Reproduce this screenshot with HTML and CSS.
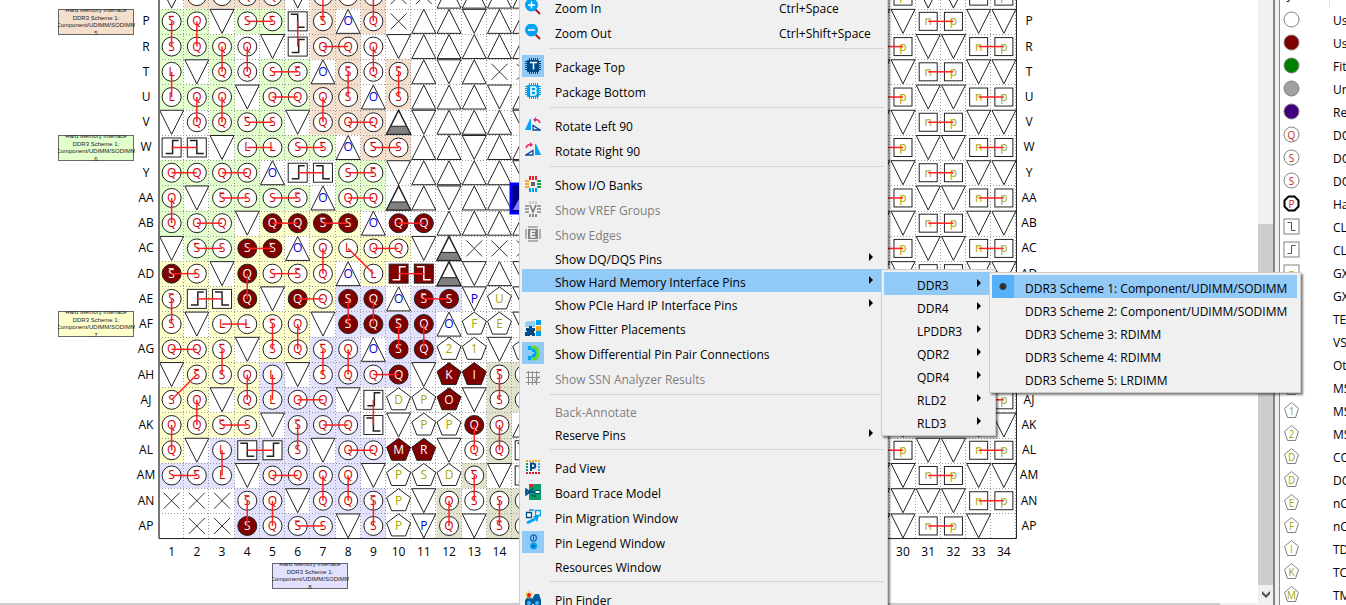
FILE: index.html
```html
<!DOCTYPE html>
<html lang="en">
<head>
    <meta charset="UTF-8">
    <meta name="viewport" content="width=device-width, initial-scale=1.0">
    <title>Pin Planner</title>
    <link rel="stylesheet" href="styles.css">
</head>
<body>
    <main class="planner">
        <div class="canvas-area">
            <svg id="package" class="package" width="1258" height="603"></svg>
            <div class="h-scroll"><div class="h-thumb"></div></div>
        </div>
        <div class="v-scroll">
            <div class="v-thumb"></div>
            <svg class="v-arrow" width="15" height="17" viewBox="0 0 15 17"><path d="M4 6l4 4 4-4v3l-4 4-4-4z" fill="#505050"/></svg>
        </div>
        <div class="splitter"></div>
        <aside class="legend">
            <div class="legend-head"><span>Symbol</span></div>
            <ul id="legend-list"></ul>
        </aside>
    </main>

    <nav class="menu main-menu">
        <ul>
            <li><button class="item tall"><svg class="icon" viewBox="0 0 16 16"><path d="M10 10l5 5" stroke="#b11a1a" stroke-width="2"/><circle cx="6.500" cy="6" r="6.500" fill="#00a3f5"/><path d="M3 6h7M6.500 2.500v7" stroke="#fff" stroke-width="1.500"/></svg>Zoom In<span class="key">Ctrl+Space</span></button></li>
            <li><button class="item tall"><svg class="icon" viewBox="0 0 16 16"><path d="M10 10l5 5" stroke="#b11a1a" stroke-width="2"/><circle cx="6.500" cy="6" r="6.500" fill="#00a3f5"/><path d="M3 6h7" stroke="#fff" stroke-width="1.500"/></svg>Zoom Out<span class="key">Ctrl+Shift+Space</span></button></li>
            <li class="sep"></li>
            <li><button class="item tall"><svg class="icon on" viewBox="0 0 16 16"><path d="M4.500 0v16M6.500 0v16M8.500 0v16M10.500 0v16M12.500 0v16M0 3.500h16M0 5.500h16M0 7.500h16M0 9.500h16M0 11.500h16" stroke="#004a86"/><rect x="2" y="2" width="12" height="12" rx="1" fill="#004a86"/><path d="M5 4.500h7M8.500 4.500v7" stroke="#fff" stroke-width="1.500"/></svg>Package Top</button></li>
            <li><button class="item tall"><svg class="icon" viewBox="0 0 16 16"><path d="M4.500 0v16M6.500 0v16M8.500 0v16M10.500 0v16M12.500 0v16M0 3.500h16M0 5.500h16M0 7.500h16M0 9.500h16M0 11.500h16" stroke="#00a0e9"/><rect x="2" y="2" width="12" height="12" rx="1" fill="#00a0e9"/><path d="M6 4v8h3a2 2 0 0 0 0-4h-3h3a2 2 0 0 0 0-4z" fill="none" stroke="#fff" stroke-width="1.500"/></svg>Package Bottom</button></li>
            <li class="sep"></li>
            <li><button class="item tall"><svg class="icon" viewBox="0 0 16 16"><path d="M0 13L5 2h1v11z" fill="#00a3f5"/><path d="M8 13V8.500L15 13z" fill="none" stroke="#0d47a1" stroke-width="1.300"/><path d="M9 3c3-1 5 0 6 3" fill="none" stroke="#e0266c" stroke-width="1.500"/><path d="M8 3l3-3v5z" fill="#e0266c"/></svg>Rotate Left 90</button></li>
            <li><button class="item tall"><svg class="icon" viewBox="0 0 16 16"><path d="M16 13L11 2h-1v11z" fill="#00a3f5"/><path d="M8 13V8.500L1 13z" fill="none" stroke="#0d47a1" stroke-width="1.300"/><path d="M7 3C4 2 2 3 1 6" fill="none" stroke="#e0266c" stroke-width="1.500"/><path d="M8 3L5 0v5z" fill="#e0266c"/></svg>Rotate Right 90</button></li>
            <li class="sep"></li>
            <li><button class="item tall"><svg class="icon" viewBox="0 0 16 16"><path d="M5 0v4M8 0v4M11 0v4" stroke="#e8202c" stroke-width="2"/><path d="M5 12v4M8 12v4M11 12v4" stroke="#00a0e9" stroke-width="2"/><path d="M0 5h4M0 8h4M0 11h4" stroke="#f7a823" stroke-width="2"/><path d="M12 5h4M12 8h4M12 11h4" stroke="#0b9d58" stroke-width="2"/><path d="M6 6h4v4H6z" fill="#666"/></svg>Show I/O Banks</button></li>
            <li><button class="item tall" disabled><svg class="icon" viewBox="0 0 16 16"><path d="M5 0v3M8 0v3M11 0v3" stroke="#ccc" stroke-width="2"/><path d="M5 13v3M8 13v3M11 13v3" stroke="#8c8c8c" stroke-width="2"/><path d="M0 5h4M0 8h4M0 11h4M12 5h4M12 8h4M12 11h4" stroke="#a0a0a0" stroke-width="2"/><path d="M5 4l3 7 3-7" fill="none" stroke="#777" stroke-width="1.500"/></svg>Show VREF Groups</button></li>
            <li><button class="item tall" disabled><svg class="icon" viewBox="0 0 16 16"><path d="M3 0h10v2H3zM0 3h2v10H0zM14 3h2v10h-2zM3 14h10v2H3z" fill="#b0b0b0"/><path d="M3 3h10v10H3z" fill="#808080"/><path d="M10.500 5H6v6h4.500M6 8h4" fill="none" stroke="#fff" stroke-width="1.500"/></svg>Show Edges</button></li>
            <li><button class="item">Show DQ/DQS Pins<i class="arrow"></i></button></li>
            <li class="open"><button class="item">Show Hard Memory Interface Pins<i class="arrow"></i></button>
                <ul class="menu submenu memory-menu">
                    <li class="open"><button class="item">DDR3<i class="arrow"></i></button>
                        <ul class="menu submenu scheme-menu">
                            <li class="open checked"><button class="item">DDR3 Scheme 1: Component/UDIMM/SODIMM</button></li>
                            <li><button class="item">DDR3 Scheme 2: Component/UDIMM/SODIMM</button></li>
                            <li><button class="item">DDR3 Scheme 3: RDIMM</button></li>
                            <li><button class="item">DDR3 Scheme 4: RDIMM</button></li>
                            <li><button class="item">DDR3 Scheme 5: LRDIMM</button></li>
                        </ul>
                    </li>
                    <li><button class="item">DDR4<i class="arrow"></i></button></li>
                    <li><button class="item">LPDDR3<i class="arrow"></i></button></li>
                    <li><button class="item">QDR2<i class="arrow"></i></button></li>
                    <li><button class="item">QDR4<i class="arrow"></i></button></li>
                    <li><button class="item">RLD2<i class="arrow"></i></button></li>
                    <li><button class="item">RLD3<i class="arrow"></i></button></li>
                </ul>
            </li>
            <li><button class="item">Show PCIe Hard IP Interface Pins<i class="arrow"></i></button></li>
            <li><button class="item tall"><svg class="icon" viewBox="0 0 16 16"><path d="M0 2h2v-1h3v1h1v-1h4v6H0z" fill="#8ed0f5"/><path d="M11 0h5v5h-5zM11 11h5v5h-5z" fill="#00a0e9"/><path d="M11 6h5v5h-5z" fill="#f7a823"/><path d="M1 8h3V6h3v2h3v3H9v2h1v3H7v-1H5v1H0v-4h2v-1H1z" fill="#004a86"/></svg>Show Fitter Placements</button></li>
            <li><button class="item tall"><svg class="icon on" viewBox="0 0 16 16"><path d="M3 1h8l3 3v3l-2 1 2 1v3l-3 3H3v-4h4v-2h2V7H7V5H3z" fill="#00a3f5"/><path d="M6 2h3c3 1 4 3 4 6s-1 5-4 6H6" fill="none" stroke="#6bdc23" stroke-width="3"/></svg>Show Differential Pin Pair Connections</button></li>
            <li><button class="item tall" disabled><svg class="icon" viewBox="0 0 16 16"><path d="M1 2.500h14M1 7.500h14M1 12.500h14M3.500 1v14M7.500 1v14M11.500 1v14M9 9l2 3 3-6" fill="none" stroke="#8c8c8c"/></svg>Show SSN Analyzer Results</button></li>
            <li class="sep"></li>
            <li><button class="item" disabled>Back-Annotate</button></li>
            <li><button class="item">Reserve Pins<i class="arrow"></i></button></li>
            <li class="sep"></li>
            <li><button class="item tall"><svg class="icon" viewBox="0 0 16 16"><path d="M1 2h14" stroke="#f7a823" stroke-width="2" stroke-dasharray="2 1"/><path d="M1 14h14" stroke="#d0202c" stroke-width="2" stroke-dasharray="2 1"/><path d="M2 4v9" stroke="#0b9d58" stroke-width="2" stroke-dasharray="2 1"/><path d="M14 4v9" stroke="#3f9fdd" stroke-width="2" stroke-dasharray="2 1"/><path d="M6 12V4.500h2a2 2 0 0 1 0 4.500H6" fill="none" stroke="#004a86" stroke-width="2"/></svg>Pad View</button></li>
            <li><button class="item tall"><svg class="icon" viewBox="0 0 16 16"><path d="M4 0h12v16H4z" fill="#0b9d68"/><path d="M5 0h3v3H5z" fill="#e8202c"/><path d="M0 8h10M1 5l4 3-4 3zM6 12h5M8 4l-3 4" fill="none" stroke="#004a86" stroke-width="1.500"/><rect x="10" y="6.500" width="5" height="3" rx="1" fill="#fff" stroke="#004a86"/></svg>Board Trace Model</button></li>
            <li><button class="item tall"><svg class="icon" viewBox="0 0 16 16"><path d="M1.500 3.500h5v5h-5z" fill="#fff" stroke="#004a86" stroke-width="1.300"/><path d="M4 1h5M10.500 1.500h5v5h-5z" fill="none" stroke="#00a0e9" stroke-width="1.300"/><path d="M2 14l8-4" stroke="#00a3f5" stroke-width="3"/><path d="M8 7h6l-2 6z" fill="#00a3f5"/></svg>Pin Migration Window</button></li>
            <li><button class="item tall"><svg class="icon on" viewBox="0 0 16 16"><circle cx="8.500" cy="4" r="3" fill="none" stroke="#0d6fb8" stroke-width="1.300"/><path d="M8.500 2.500v3" stroke="#004a86"/><circle cx="8.500" cy="12" r="3.500" fill="#00a0f0"/><path d="M7.500 11h2v2h-2z" fill="#004a86"/></svg>Pin Legend Window</button></li>
            <li><button class="item">Resources Window</button></li>
            <li class="sep"></li>
            <li><button class="item tall"><svg class="icon" viewBox="0 0 16 16"><path d="M0 16V9l3-3h2l2 2 3-5h4l2 6v7H9v-3H7v3z" fill="#005a9e"/><circle cx="4" cy="12" r="2" fill="#3fb6f5"/><circle cx="12" cy="12" r="2" fill="#3fb6f5"/><path d="M4 0v8M0 4h8M1 1l6 6M7 1L1 7" stroke="#f7c600"/><circle cx="4" cy="4" r="2" fill="#e8202c"/></svg>Pin Finder</button></li>
        </ul>
    </nav>

    <script src="script.js"></script>
</body>
</html>
```

FILE: styles.css
```css
* {
    box-sizing: border-box;
}

body {
    margin: 0;
    height: 100vh;
    overflow: hidden;
    font-family: "Open Sans", "Noto Sans", sans-serif;
    font-size: 12px;
    color: #000;
    background: #fff;
}

ul {
    list-style: none;
    margin: 0;
    padding: 0;
}

.planner {
    display: flex;
    height: 100vh;
}

/* package view */
.canvas-area {
    flex: 1;
    min-width: 0;
    display: flex;
    flex-direction: column;
    overflow: hidden;
}

.package {
    flex: 1;
    min-height: 0;
}

.h-scroll {
    height: 2px;
    background: #f0f0f0;
}

.h-thumb {
    width: 97%;
    height: 100%;
    background: #cdcdcd;
}

.package text {
    text-anchor: middle;
    font-size: 12px;
}

.package .pin-text {
    fill: #cc0000;
}

.package .light {
    fill: #fff;
}

.package .blue {
    fill: #0000e0;
}

.package .olive {
    fill: #a8a800;
}

.package .bank-text {
    font-family: "Liberation Sans", sans-serif;
    font-size: 6px;
    fill: #222;
}

.shape {
    fill: #fff;
    stroke: #222;
}

.used {
    fill: #800000;
    stroke: #222;
}

.link {
    stroke: #ff2020;
    stroke-width: 1.5;
}

.grid-line {
    stroke: #999;
    stroke-dasharray: 1 2;
}

.v-scroll {
    width: 15px;
    background: #f0f0f0;
    display: flex;
    flex-direction: column;
    justify-content: flex-end;
    padding-bottom: 3px;
}

.v-thumb {
    height: 60%;
    background: #cdcdcd;
}

.splitter {
    width: 7px;
    background: #f0f0f0;
    border-left: 2px solid #828790;
    border-right: 1px solid #828790;
}

/* legend */
.legend {
    width: 66px;
    overflow: hidden;
}

.legend-head {
    width: 50px;
    height: 8px;
    display: flex;
    align-items: flex-end;
    border-right: 1px solid #e5e5e5;
}

.legend-head span {
    margin-bottom: 5px;
    line-height: 16px;
}

.legend li {
    display: flex;
    align-items: center;
    height: 23px;
    padding-left: 3px;
    white-space: nowrap;
}

.legend li span {
    padding-top: 2px;
}

.legend li svg {
    flex: none;
    margin-right: 33px;
}

.legend li text {
    font-size: 10px;
    text-anchor: middle;
}

.legend .red {
    fill: #cc2222;
}

.legend .olive {
    fill: #a8a800;
}

/* menus */
.menu {
    position: absolute;
    padding: 2px;
    background: #f0f0f0;
    border: 1px solid #ccc;
    box-shadow: 2px 2px 2px rgba(0, 0, 0, 0.5);
}

.main-menu {
    left: 519px;
    top: -9px;
    width: 369px;
}

.menu li {
    position: relative;
}

.item {
    display: flex;
    align-items: center;
    position: relative;
    width: 100%;
    height: 23px;
    margin: 0;
    padding: 3px 0 0 33px;
    border: none;
    background: none;
    font-family: inherit;
    font-size: 12px;
    color: #000;
    white-space: nowrap;
    text-align: left;
}

.item.tall {
    height: 25px;
}

.item:disabled {
    color: #7f7f7f;
}

.open > .item {
    background: #91c9f7;
}

.item .icon {
    position: absolute;
    left: 0;
    top: 2px;
    width: 22px;
    height: 22px;
    padding: 3px;
}

.item .icon.on {
    background: #91c9f7;
}

.key {
    position: absolute;
    left: 257px;
}

.arrow {
    position: absolute;
    right: 12px;
    top: 7px;
    border-left: 4px solid #000;
    border-top: 4px solid transparent;
    border-bottom: 4px solid transparent;
}

.sep {
    height: 9px;
    padding: 4px 1px 0 28px;
}

.sep::before {
    content: "";
    display: block;
    height: 1px;
    background: #d4d4d4;
}

.submenu {
    left: calc(100% - 4px);
    top: 0;
    z-index: 1;
}

.memory-menu {
    width: 115px;
}

.scheme-menu {
    width: 312px;
}

.scheme-menu .item {
    width: 305px;
}

.checked > .item::before {
    content: "";
    position: absolute;
    left: 0;
    top: 0;
    width: 22px;
    height: 23px;
    background: radial-gradient(circle, #333 3px, #56b0fa 4px);
}
```

FILE: script.js
```js
const LEFT = 159;
const TOP = -16.5;
const PITCH = 25.22;
const ROW_PITCH = 25.23;

const names = "N P R T U V W Y AA AB AC AD AE AF AG AH AJ AK AL AM AN AP".split(" ");
const banks = { o: "#f4dfcc", g: "#e2ffcc", y: "#ffffcc", b: "#e2e2ff", k: "#e2e2cc" };

// columns 1-15: optional bank colour, then the symbol
// v ^ triangles, t shaded triangle, x no pin, r/f clocks, # pentagon, * in use, Z is S with a bar
const west = {
    N: "v oC oC oQ oQ v oC oC oC x x ^ ^ ^ ^",
    P: "gZ gQ v gS gZ f oZ ^O oQ x ^ ^ v ^ ^",
    R: "gS gQ gQ Q v r oQ oQ Q v ^ ^ ^ ^ ^",
    T: "gL v gQ Q gS gZ ^O oZ Q oZ ^ v ^ x x",
    U: "gL gQ gQ v gQ gQ oQ oS ^O oS ^ ^ ^ v ^",
    V: "v Q gQ gZ gS v oQ oQ oQ t v ^ ^ ^ v",
    W: "r f v gL gL gS gZ ^O oZ oS ^ ^ v ^ ^",
    Y: "gQ gQ gQ gQ ^O r f gS gZ v ^ ^ ^ ^ v",
    AA: "gQ v gZ gS gS gZ ^O gQ gQ t ^ v ^ ^ ^",
    AB: "gQ gQ gQ v y*Q y*Q y*Z y*S ^O *Q *Q ^ ^ ^ ^",
    AC: "v gZ gS y*S y*Z ^O yQ yL yQ yQ v t x x x",
    AD: "y*Z yS v y*Q yS yZ yQ ^O yL R F t v ^ v",
    AE: "yZ yr yf y*Q v y*Q yQ b*S b*Q ^O b*Z b*S vP #U v",
    AF: "yS v yL yL yZ yQ v b*S b*Q b*Z b*Q ^O #F #E v",
    AG: "yQ yQ yZ v yS yQ bZ bQ ^O b*S b*Q #2 #1 v #",
    AH: "v yZ yS yQ bL v bS bQ bQ b*Q v #*K #*I kZ kC",
    AJ: "yS yQ v yQ bL bQ bQ v r #D #P #*O v kS kC",
    AK: "yQ yQ yZ yS v bZ bQ bQ f v #P #P *Q kQ ^",
    AL: "yQ v bL bf br bS v bQ bQ #*M #*R v Q kQ f",
    AM: "bS bZ bL v bQ bQ bQ bQ v #P #S #D kZ v r",
    AN: "x x x bZ bQ v bQ bQ bZ #P v kQ S kS kC",
    AP: "- x x b*S bQ bZ bS v bS #P vP kQ v kZ kC"
};

// transceiver side, columns 29-34
const even = "v v [n [p v v";
const odd = "[n [p v v [n [p";
const east = { AN: "v v v v [n [p", AP: "v v [n [p v -" };

const links = ("N7-P7 N9-P9 P1-R1 P2-R2 P4-P5 P6-R6 R3-T3 R4-T4 R7-R8 R9-T9 T1-U1 T5-T6 T8-U8 T10-U10 " +
    "U2-V2 U3-V3 U5-U6 U7-V7 V4-V5 V8-V9 W1-W2 W4-W5 W6-W7 W9-W10 Y1-Y2 Y3-Y4 Y6-Y7 Y8-Y9 " +
    "AA1-AB1 AA3-AA4 AA5-AA6 AA8-AA9 AB2-AB3 AB5-AB6 AB7-AB8 AB10-AB11 AC2-AC3 AC4-AC5 AC7-AD7 AC8-AD9 AC9-AC10 " +
    "AD1-AD2 AD4-AE4 AD5-AD6 AD10-AD11 AE1-AF1 AE2-AE3 AE6-AE7 AE8-AF8 AE9-AF9 AE11-AE12 " +
    "AF3-AF4 AF5-AG5 AF6-AG6 AF10-AG10 AF11-AG11 AG1-AG2 AG3-AH3 AG7-AH7 AG8-AH8 " +
    "AH2-AJ1 AH4-AJ4 AH5-AJ5 AH9-AH10 AH14-AJ14 AJ2-AK2 AJ6-AJ7 AJ9-AK9 " +
    "AK1-AL1 AK3-AK4 AK6-AL6 AK7-AK8 AK13-AL13 AK14-AL14 AL3-AM3 AL4-AL5 AL8-AL9 " +
    "AM1-AM2 AM5-AM6 AM7-AN7 AM8-AN8 AM13-AN13 AN4-AP4 AN5-AP5 AN9-AP9 AN12-AP12 AN14-AP14 AP6-AP7").split(" ");

function colX(col) {
    return LEFT + (col - 0.5) * PITCH;
}

function rowY(name) {
    return TOP + (names.indexOf(name) + 0.5) * ROW_PITCH;
}

function letter(ch, cls, y = 4) {
    return `<text y="${y}" class="${cls}">${ch}</text>`;
}

// one pin symbol around its own centre
function symbol(code) {
    const used = code.includes("*");
    const shape = used ? "used" : "shape";
    const c = code.replace("*", "");
    const last = c[c.length - 1];

    if (c === "-") return "";
    if (c === "x") return `<path d="M-8-8L8 8M8-8L-8 8" stroke="#333"/>`;
    if (c[0] === "v") return `<path class="shape" d="M-12-12H12L0 12z"/>` + (c[1] ? letter(c[1], "blue") : "");
    if (c[0] === "^") return `<path class="shape" d="M-12 12H12L0-12z"/>` + (c[1] ? letter(c[1], "blue") : "");
    if (c === "t") return `<path class="shape" d="M-12 12H12L0-12z" stroke-width="1.5"/><path d="M-8 4H8L12 12H-12z" fill="#808080" stroke="#222"/>`;
    if (c[0] === "#") {
        return `<path class="${shape}" d="M0-12L12-3L7 10H-7L-12-3z"/>` +
            (c[1] ? letter(c[1], used ? "light" : "olive") : "");
    }
    if (c[0] === "[") return `<rect class="shape" x="-9" y="-9" width="18" height="18"/>` + letter(last, "olive");
    if ("rfRF".includes(c)) {
        const dark = c === "R" || c === "F";
        const d = c.toLowerCase() === "r" ? "M-6 6H1V-7H7" : "M-7-7H0V6H7";
        return `<rect class="${dark ? "used" : "shape"}" x="-9.5" y="-9.5" width="19" height="19"/>` +
            `<path d="${d}" fill="none" stroke="${dark ? "#fff" : "#222"}" stroke-width="1.5"/>`;
    }
    let out = `<circle class="${shape}" r="9.5"/>`;
    if (c !== "C") {
        out += letter(c === "Z" ? "S" : c, used ? "light" : "pin-text");
        if (c === "Z") out += `<path d="M-3-5H2" stroke="${used ? "#fff" : "#cc0000"}"/>`;
    }
    return out;
}

function link(a, b) {
    const [, r1, c1] = a.match(/([A-Z]+)(\d+)/);
    const [, r2, c2] = b.match(/([A-Z]+)(\d+)/);
    return `<line class="link" x1="${colX(c1)}" y1="${rowY(r1)}" x2="${colX(c2)}" y2="${rowY(r2)}"/>`;
}

function drawPackage() {
    const right = LEFT + 34 * PITCH;
    const bottom = TOP + names.length * ROW_PITCH;
    let fills = "", lines = "", pins = "", labels = "", wires = "";

    const place = (token, name, col) => {
        const [, bank, code] = token.match(/^([ogybk]?)(.*)$/);
        const x = colX(col), y = rowY(name);
        if (bank) {
            fills += `<rect x="${x - PITCH / 2}" y="${y - ROW_PITCH / 2}" width="${PITCH}" height="${ROW_PITCH}" fill="${banks[bank]}"/>`;
        }
        pins += `<g transform="translate(${x} ${y})">${symbol(code)}</g>`;
    };

    names.forEach((name, i) => {
        west[name].split(" ").forEach((t, n) => place(t, name, n + 1));
        (east[name] || (i % 2 ? even : odd)).split(" ").forEach((t, n) => {
            place(t, name, n + 29);
            if (t === "[n") wires += link(name + (n + 29), name + (n + 30));
        });
        const y = Math.round(TOP + i * ROW_PITCH) + 0.5;
        lines += `<line class="grid-line" x1="${LEFT}" x2="${right}" y1="${y}" y2="${y}"/>`;
        labels += `<text x="146" y="${rowY(name) + 4}">${name}</text><text x="1029" y="${rowY(name) + 4}">${name}</text>`;
    });
    for (let col = 1; col <= 34; col++) {
        const x = Math.round(LEFT + col * PITCH) - 0.5;
        lines += `<line class="grid-line" x1="${x}" x2="${x}" y1="0" y2="${bottom}"/>`;
        labels += `<text x="${colX(col)}" y="556">${col}</text>`;
    }
    links.forEach(l => { wires += link(...l.split("-")); });

    const frame = `<path d="M${LEFT} 0V${bottom}" stroke="#777" stroke-width="2"/>` +
        `<path d="M${LEFT} ${bottom}H${right}V0" fill="none" stroke="#222"/>`;
    const selected = `<rect x="511" y="184" width="29" height="29" fill="#000080" stroke="#0000ff" stroke-width="3"/>` +
        `<path d="M513 210L526 186V210z" fill="#8080ff"/>`;

    document.getElementById("package").innerHTML = fills + lines + pins + wires + frame + selected + labels +
        bankLabel(58, 9, "o", 5) + bankLabel(58, 135, "g", 6) + bankLabel(58, 311, "y", 7) + bankLabel(272, 563, "b", 8);
}

function bankLabel(x, y, bank, number) {
    const rows = ["Hard Memory Interface", "DDR3 Scheme 1:", "Component/UDIMM/SODIMM", number];
    const baselines = [3, 11, 18, 26];
    return `<svg x="${x}" y="${y}" width="77" height="26">
        <rect x="0.5" y="0.5" width="75" height="25" fill="${banks[bank]}" stroke="#666"/>
        ${rows.map((t, i) => `<text class="bank-text" x="38" y="${baselines[i]}">${t}</text>`).join("")}
    </svg>`;
}

const legend = [
    ["o", "#fff", "User assigned pin"], ["o", "#800000", "User assigned"], ["o", "#008000", "Fitter assigned pin"],
    ["o", "#a0a0a4", "Unbonded pad"], ["o", "#400080", "Reserved pin"],
    ["oQ", "#fff", "DQ"], ["oS", "#fff", "DQS"], ["oS", "#fff", "DQSB"], ["hP", "#fff", "Hard processor"],
    ["f", "#fff", "CLK_n"], ["r", "#fff", "CLK_p"], ["sn", "#fff", "GXB_n"], ["sp", "#fff", "GXB_p"],
    ["p", "#fff", "TEMPDIODE"], ["p", "#fff", "VSS"], ["p", "#fff", "Other"],
    ["p0", "#fff", "MSEL0"], ["p1", "#fff", "MSEL1"], ["p2", "#fff", "MSEL2"],
    ["pD", "#fff", "CONF_DONE"], ["pD", "#fff", "DCLK"], ["pE", "#fff", "nCE"], ["pF", "#fff", "nCONFIG"],
    ["pI", "#fff", "TDI"], ["pK", "#fff", "TCK"], ["pM", "#fff", "TMS"]
];

function legendIcon(kind, fill) {
    const stroke = `fill="${fill}" stroke="#808080"`;
    const shapes = {
        o: `<circle r="7.5" ${stroke}/>`,
        h: `<path d="M-3-7H3L7-3V3L3 7H-3L-7 3V-3z" fill="#fff" stroke="#000" stroke-width="2"/>`,
        f: `<rect x="-7.5" y="-7.5" width="15" height="15" ${stroke}/><path d="M-4-4H0V4H4" fill="none" stroke="#555"/>`,
        r: `<rect x="-7.5" y="-7.5" width="15" height="15" ${stroke}/><path d="M-4 4H0V-4H4" fill="none" stroke="#555"/>`,
        s: `<rect x="-7.5" y="-7.5" width="15" height="15" ${stroke}/>`,
        p: `<path d="M0-8L7-2L4 7H-4L-7-2z" ${stroke}/>`
    };
    const cls = "oh".includes(kind[0]) ? "red" : "olive";
    return `<svg width="17" height="17" viewBox="-8.5 -8.5 17 17">${shapes[kind[0]]}${kind[1] ? letter(kind[1], cls) : ""}</svg>`;
}

drawPackage();
document.getElementById("legend-list").innerHTML =
    legend.map(([kind, fill, text]) => `<li>${legendIcon(kind, fill)}<span>${text}</span></li>`).join("");
```
